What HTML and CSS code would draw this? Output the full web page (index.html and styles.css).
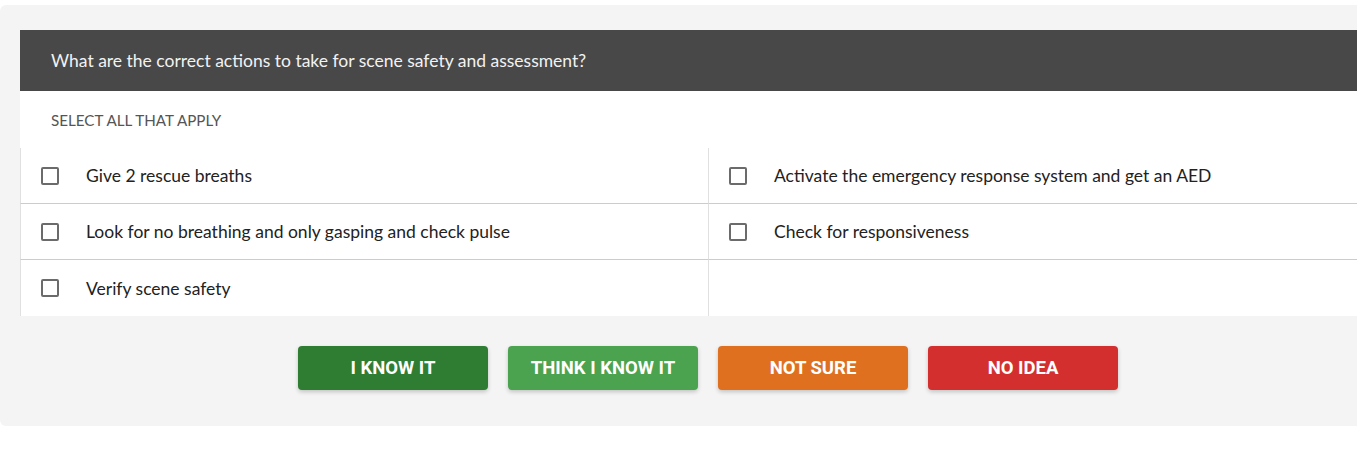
FILE: index.html
```html
<!DOCTYPE html>
<html lang="en">
<head>
    <meta charset="UTF-8">
    <title>Scene Safety Question</title>
    <link rel="stylesheet" href="styles.css">
</head>
<body>
    <div class="quiz-panel">
        <div class="question-header">What are the correct actions to take for scene safety and assessment?</div>
        <div class="question-hint">SELECT ALL THAT APPLY</div>

        <div class="options-grid">
            <label class="option">
                <span class="checkbox"></span>
                <span class="option-text">Give 2 rescue breaths</span>
            </label>
            <label class="option">
                <span class="checkbox"></span>
                <span class="option-text">Activate the emergency response system and get an AED</span>
            </label>
            <label class="option">
                <span class="checkbox"></span>
                <span class="option-text">Look for no breathing and only gasping and check pulse</span>
            </label>
            <label class="option">
                <span class="checkbox"></span>
                <span class="option-text">Check for responsiveness</span>
            </label>
            <label class="option">
                <span class="checkbox"></span>
                <span class="option-text">Verify scene safety</span>
            </label>
            <div class="option empty"></div>
        </div>

        <div class="confidence-buttons">
            <button type="button" class="conf-btn know">I know it</button>
            <button type="button" class="conf-btn think">Think I know it</button>
            <button type="button" class="conf-btn unsure">Not sure</button>
            <button type="button" class="conf-btn no-idea">No idea</button>
        </div>
    </div>
</body>
</html>
```

FILE: styles.css
```css
body {
    margin: 0;
    padding-top: 5px;
    background-color: #ffffff;
    font-family: Lato, "Open Sans", sans-serif;
    overflow: hidden;
}
.quiz-panel {
    width: 1416px;
    box-sizing: border-box;
    padding: 25px 20px 36px;
    background-color: #f4f4f4;
    border-radius: 6px;
}
.question-header {
    height: 61px;
    display: flex;
    align-items: center;
    padding-left: 31px;
    background-color: #484848;
    color: #f2f2f2;
    font-size: 17.5px;
}
.question-hint {
    height: 57px;
    display: flex;
    align-items: center;
    padding-left: 31px;
    background-color: #ffffff;
    color: #555555;
    font-size: 15.2px;
}
.options-grid {
    display: grid;
    grid-template-columns: 688px 1fr;
    grid-auto-rows: 56px;
    background-color: #ffffff;
}
.option {
    display: flex;
    align-items: center;
    padding-left: 20px;
    border-left: 1px solid #e0e0e0;
    border-bottom: 1px solid #cccccc;
    color: #222222;
    font-size: 17.5px;
    cursor: pointer;
}
.option:nth-last-child(-n+2) {
    border-bottom: none;
}
.checkbox {
    width: 18px;
    height: 18px;
    box-sizing: border-box;
    border: 2px solid #6b6b6b;
    border-radius: 2px;
    margin-right: 27px;
    background-color: #ffffff;
    flex-shrink: 0;
}
.confidence-buttons {
    display: flex;
    justify-content: center;
    gap: 20px;
    margin-top: 30px;
}
.conf-btn {
    width: 190px;
    height: 44px;
    border: none;
    border-radius: 4px;
    color: #ffffff;
    font-family: Roboto, sans-serif;
    font-weight: bold;
    font-size: 18.5px;
    text-transform: uppercase;
    box-shadow: 0 2px 4px rgba(0,0,0,0.2);
    cursor: pointer;
}
.know {
    background-color: #2e7d32;
}
.think {
    background-color: #4ba24f;
}
.unsure {
    background-color: #de7020;
}
.no-idea {
    background-color: #d32f2f;
}
```
